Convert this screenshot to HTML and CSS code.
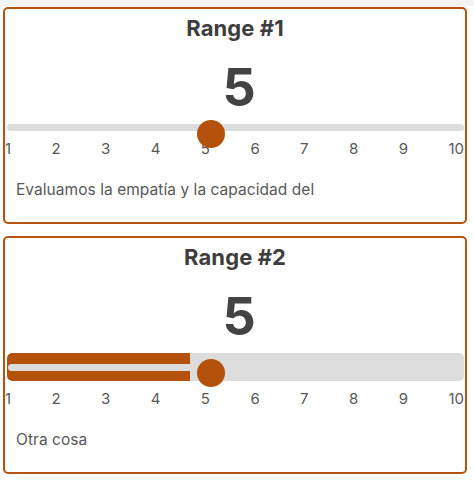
FILE: index.html
```html
<!DOCTYPE html>
<html lang="es">
<head>
<meta charset="utf-8">
<title>Ranges</title>
<link rel="stylesheet" href="styles.css">
</head>
<body>
<main class="list">
  <section class="card">
    <h2 class="title">Range #1</h2>
    <div class="value">5</div>
    <div class="slider">
      <div class="track"></div>
      <div class="thumb thumb-thin" style="left: 44.4%"></div>
    </div>
    <div class="ticks">
      <span>1</span><span>2</span><span>3</span><span>4</span><span>5</span><span>6</span><span>7</span><span>8</span><span>9</span><span>10</span>
    </div>
    <p class="desc">Evaluamos la empatía y la capacidad del</p>
  </section>
  <section class="card">
    <h2 class="title">Range #2</h2>
    <div class="value">5</div>
    <div class="slider">
      <div class="track track-thick">
        <div class="fill" style="width: 40%"><div class="fill-core"></div></div>
      </div>
      <div class="thumb thumb-thick" style="left: 44.4%"></div>
    </div>
    <div class="ticks">
      <span>1</span><span>2</span><span>3</span><span>4</span><span>5</span><span>6</span><span>7</span><span>8</span><span>9</span><span>10</span>
    </div>
    <p class="desc">Otra cosa</p>
  </section>
</main>
</body>
</html>
```
FILE: styles.css
```css
* { box-sizing: border-box; }
html, body {
  margin: 0;
  background: #ffffff;
}
body {
  font-family: Inter, "Liberation Sans", sans-serif;
  color: #404040;
  border-top: 6px solid #f4f4f5;
}
.list {
  display: flex;
  flex-direction: column;
  gap: 12px;
  padding: 1px 7px 0 3px;
}
.card {
  border: 2px solid #b4540f;
  border-radius: 5px;
  background: #fff;
  display: flex;
  flex-direction: column;
  padding: 5px 0 22px;
}
.title {
  margin: 0;
  font-size: 22px;
  line-height: 28px;
  font-weight: 700;
  text-align: center;
  color: #3d3d3d;
  letter-spacing: 0.1px;
}
.value {
  margin-top: 20px;
  font-size: 52px;
  line-height: 52px;
  font-weight: 700;
  text-align: center;
  color: #434343;
  padding-left: 6px;
  letter-spacing: -2px;
}
.slider {
  position: relative;
  margin: 10px 1px 0 2px;
}
.track {
  height: 7px;
  border-radius: 4px;
  background: #dcdcdc;
}
.track-thick {
  height: 28px;
  border-radius: 5px;
  position: relative;
  overflow: hidden;
}
.fill {
  height: 100%;
  background: #b4520b;
  border-radius: 5px 0 0 5px;
  display: flex;
  align-items: center;
}
.fill-core {
  height: 7px;
  width: 100%;
  margin-left: 1px;
  background: #dcdcdc;
  border-radius: 4px 0 0 4px;
}
.thumb {
  position: absolute;
  width: 28px;
  height: 28px;
  margin-left: -13px;
  border-radius: 50%;
  background: #b4520b;
}
.thumb-thin { top: -4px; }
.thumb-thick { top: 6px; }
.ticks {
  display: flex;
  justify-content: space-between;
  margin: 9px 1px 0 0;
  font-size: 15px;
  line-height: 18px;
  color: #585858;
  font-weight: 400;
}
.desc {
  margin: 22px 0 0 11px;
  font-size: 15.5px;
  line-height: 20px;
  color: #585858;
  letter-spacing: 0.05px;
}
```
